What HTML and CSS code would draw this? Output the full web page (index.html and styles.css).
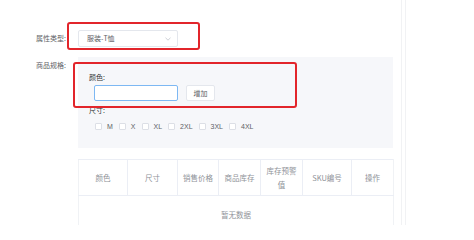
FILE: index.html
```html
<!DOCTYPE html>
<html lang="zh">
<head>
<meta charset="utf-8">
<link rel="stylesheet" href="styles.css">
</head>
<body>
<div class="page">
  <div class="main">
    <div class="form-item">
      <div class="label">属性类型:</div>
      <div class="select">
        <span class="select-text">服装-T恤</span>
        <svg class="chev" width="6" height="4" viewBox="0 0 6 4"><path d="M0.5 0.8 L3 3.2 L5.5 0.8" fill="none" stroke="#c0c4cc" stroke-width="0.8"/></svg>
      </div>
    </div>
    <div class="form-item spec">
      <div class="label">商品规格:</div>
      <div class="content">
        <div class="panel">
          <div class="sub-label">颜色:</div>
          <div class="add-row">
            <div class="input"></div>
            <div class="btn">增加</div>
          </div>
          <div class="sub-label size">尺寸:</div>
          <div class="checks">
            <label class="check"><span class="box"></span><span>M</span></label>
            <label class="check"><span class="box"></span><span>X</span></label>
            <label class="check"><span class="box"></span><span>XL</span></label>
            <label class="check"><span class="box"></span><span>2XL</span></label>
            <label class="check"><span class="box"></span><span>3XL</span></label>
            <label class="check"><span class="box"></span><span>4XL</span></label>
          </div>
        </div>
        <table class="sku">
          <colgroup>
            <col class="c49"><col class="c50"><col class="c41"><col class="c42"><col class="c42"><col class="c49"><col class="c42">
          </colgroup>
          <thead>
            <tr>
              <th>颜色</th><th>尺寸</th><th>销售价格</th><th>商品库存</th><th>库存预警值</th><th>SKU编号</th><th>操作</th>
            </tr>
          </thead>
          <tbody>
            <tr><td colspan="7" class="empty">暂无数据</td></tr>
          </tbody>
        </table>
      </div>
    </div>
  </div>
  <div class="side"></div>
</div>
<div class="mark mark1"></div>
<div class="mark mark2"></div>
</body>
</html>
```
FILE: styles.css
```css
html, body {
  margin: 0;
  padding: 0;
  background: #ffffff;
}
body {
  width: 474px;
  height: 225px;
  overflow: hidden;
  position: relative;
  font-family: "Noto Sans CJK SC", "Liberation Sans", sans-serif;
  font-size: 7px;
  color: #606266;
}
.page {
  display: flex;
  height: 225px;
}
.main {
  width: 401px;
  padding-top: 30px;
  box-sizing: border-box;
}
.side {
  width: 3px;
  height: 225px;
  border-left: 1px solid #f1f2f4;
  border-right: 1px solid #f1f2f4;
}
.form-item {
  display: flex;
  align-items: flex-start;
}
.label {
  width: 78px;
  box-sizing: border-box;
  padding-right: 12px;
  text-align: right;
  line-height: 17px;
  height: 17px;
  color: #606266;
}
.select {
  width: 100px;
  height: 17px;
  box-sizing: border-box;
  border: 1px solid #e4e7ed;
  border-radius: 2px;
  display: flex;
  align-items: center;
  justify-content: space-between;
  padding: 0 6px 0 8px;
  background: #fff;
}
.select-text {
  line-height: 15px;
  color: #606266;
}
.spec {
  margin-top: 10px;
}
.content {
  width: 315px;
}
.panel {
  background: #f6f7fa;
  padding: 14px 0 16px 11px;
}
.sub-label {
  line-height: 12px;
  height: 12px;
  color: #303133;
}
.sub-label.size {
  margin-top: 3px;
}
.add-row {
  display: flex;
  margin-top: 2px;
  margin-left: 5px;
  gap: 8px;
}
.input {
  width: 84px;
  height: 16px;
  box-sizing: border-box;
  border: 1px solid #7db8f3;
  border-radius: 2px;
  background: #fff;
}
.btn {
  width: 29px;
  height: 16px;
  box-sizing: border-box;
  border: 1px solid #e4e7ed;
  border-radius: 2px;
  background: #fff;
  text-align: center;
  line-height: 14px;
  color: #606266;
}
.checks {
  display: flex;
  margin-top: 5px;
  margin-left: 6px;
  height: 11px;
  align-items: center;
  gap: 6px;
}
.check {
  display: flex;
  align-items: center;
  gap: 5px;
  font-family: "Liberation Sans", sans-serif;
  font-size: 7px;
  color: #606266;
}
.box {
  width: 7px;
  height: 7px;
  box-sizing: border-box;
  border: 1px solid #dcdfe6;
  border-radius: 1px;
  background: #fff;
}
.sku {
  margin-top: 11px;
  width: 315px;
  border-collapse: collapse;
  table-layout: fixed;
  border-top: 1px solid #ebeef5;
  border-left: 1px solid #f0f2f5;
  border-right: 1px solid #f0f2f5;
  font-size: 7.5px;
}
.c49 { width: 49px; }
.c50 { width: 50px; }
.c41 { width: 41px; }
.c42 { width: 42px; }
.sku th {
  height: 36px;
  padding: 0 5px;
  font-weight: normal;
  color: #909399;
  line-height: 14px;
  border-right: 1px solid #ebeef5;
  border-bottom: 1px solid #ebeef5;
  text-align: center;
  box-sizing: border-box;
}
.sku th:last-child {
  border-right: none;
}
.sku td.empty {
  height: 34px;
  text-align: center;
  color: #909399;
}
.mark {
  position: absolute;
  border: 2px solid #e2252b;
  border-radius: 3px;
  box-sizing: border-box;
}
.mark1 {
  left: 67px;
  top: 22px;
  width: 133px;
  height: 28px;
}
.mark2 {
  left: 73px;
  top: 62px;
  width: 224px;
  height: 46px;
}
```
